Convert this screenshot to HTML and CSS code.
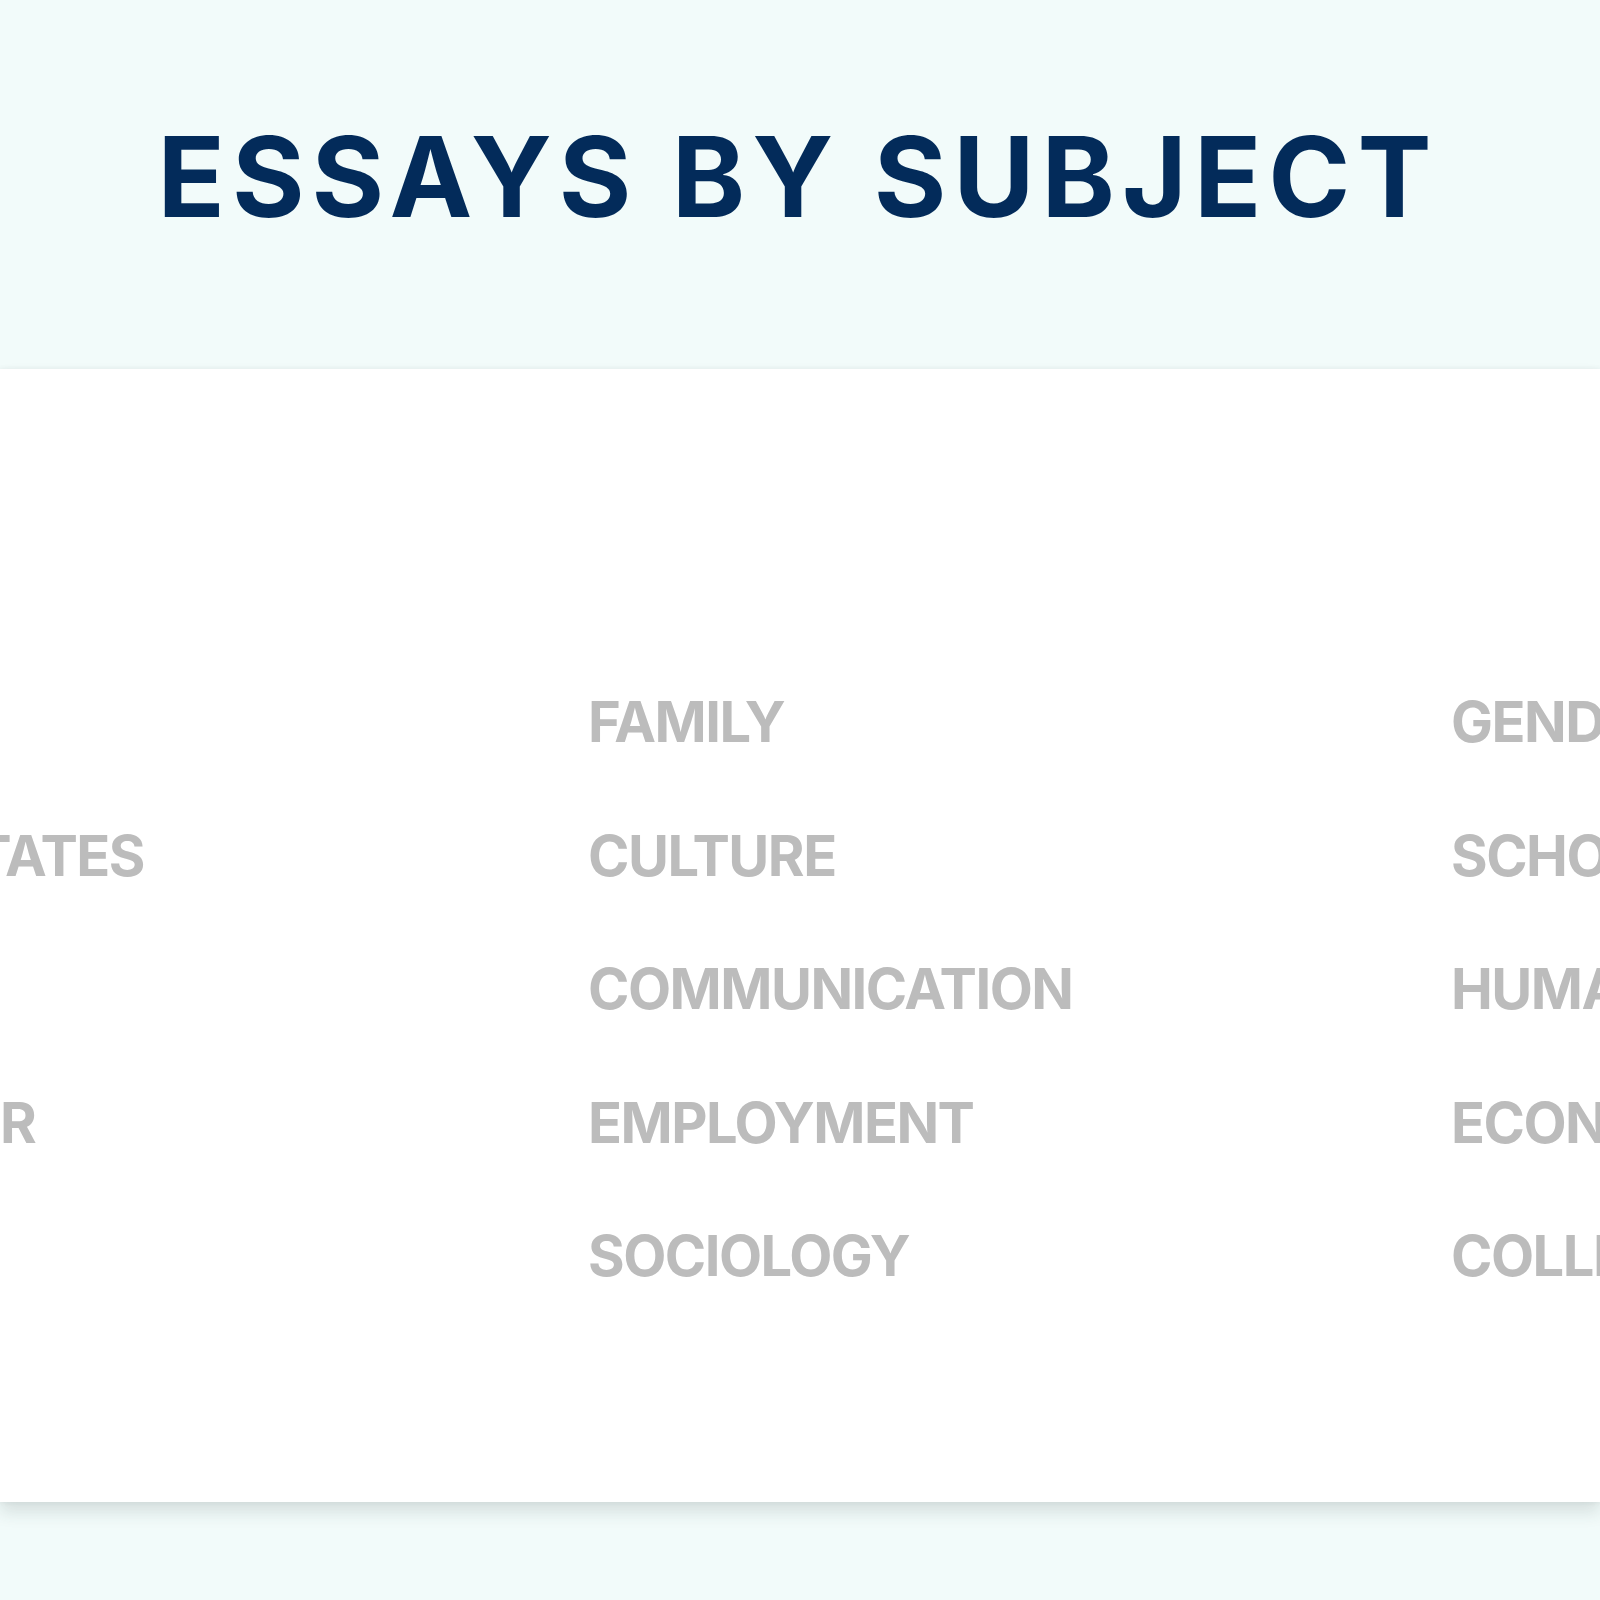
FILE: index.html
```html
<!DOCTYPE html>
<html lang="en">
<head>
<meta charset="utf-8">
<title>Essays by Subject</title>
<link rel="stylesheet" href="styles.css">
</head>
<body>
<header class="hero">
  <h1 class="hero-title">ESSAYS BY SUBJECT</h1>
</header>
<section class="subjects">
  <div class="subject-grid">
    <ul class="subject-col">
      <li><a href="#">LIFE</a></li>
      <li><a href="#">UNITED STATES</a></li>
      <li><a href="#">LOVE</a></li>
      <li><a href="#">COMPUTER</a></li>
      <li><a href="#">ART</a></li>
    </ul>
    <ul class="subject-col">
      <li><a href="#">FAMILY</a></li>
      <li><a href="#">CULTURE</a></li>
      <li><a href="#">COMMUNICATION</a></li>
      <li><a href="#">EMPLOYMENT</a></li>
      <li><a href="#">SOCIOLOGY</a></li>
    </ul>
    <ul class="subject-col">
      <li><a href="#">GENDER</a></li>
      <li><a href="#">SCHOOL</a></li>
      <li><a href="#">HUMAN RIGHTS</a></li>
      <li><a href="#">ECONOMICS</a></li>
      <li><a href="#">COLLEGE</a></li>
    </ul>
  </div>
</section>
<footer class="after"></footer>
</body>
</html>
```

FILE: styles.css
```css
html, body {
  margin: 0;
  padding: 0;
}

body {
  background: #f2fbfa;
  overflow: hidden;
  font-family: Inter, "DejaVu Sans", sans-serif;
}

.hero {
  height: 369px;
  box-sizing: border-box;
  padding-top: 112px;
  text-align: center;
}

.hero-title {
  margin: 0 0 0 -4px;
  font-size: 111px;
  line-height: 130px;
  font-weight: 700;
  color: #032b5a;
  letter-spacing: 7px;
}

.subjects {
  position: relative;
  background: #ffffff;
  height: 1133px;
  box-sizing: border-box;
  padding-top: 320px;
  box-shadow: 0 10px 16px rgba(40, 60, 60, 0.14), 0 0 5px rgba(40, 60, 60, 0.07);
}

.subject-grid {
  display: grid;
  grid-template-columns: repeat(3, 863px);
  margin-left: -275px;
}

.subject-col {
  list-style: none;
  margin: 0;
  padding: 0;
  display: flex;
  flex-direction: column;
  gap: 67.5px;
}

.subject-col li {
  font-size: 56px;
  line-height: 66px;
  font-weight: 700;
  letter-spacing: -1.5px;
  white-space: nowrap;
}

.subject-col a {
  color: #bcbcbc;
  text-decoration: none;
}

.after {
  height: 100px;
}
```
